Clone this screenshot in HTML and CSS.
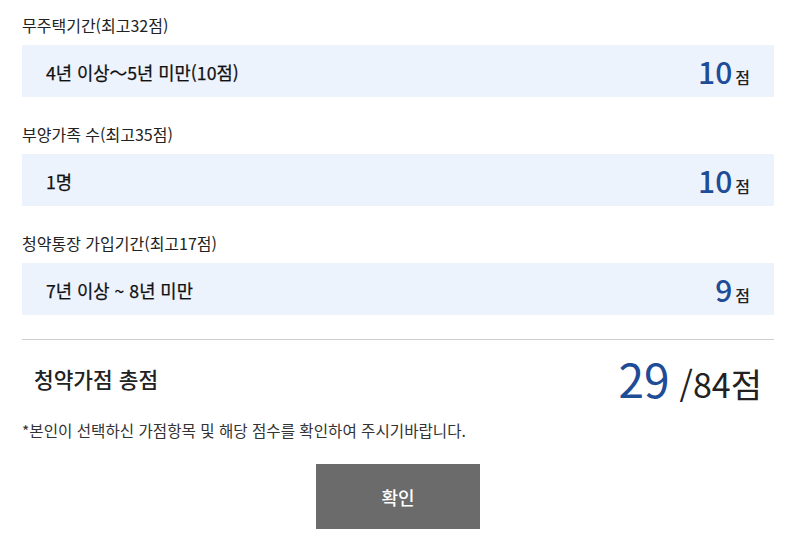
FILE: index.html
```html
<!DOCTYPE html>
<html lang="ko">
<head>
<meta charset="utf-8">
<link rel="stylesheet" href="styles.css">
</head>
<body>
<div class="page">
  <div class="group">
    <div class="label">무주택기간(최고32점)</div>
    <div class="box"><span class="val">4년 이상～5년 미만(10점)</span><span class="score"><b>10</b><i>점</i></span></div>
  </div>
  <div class="group">
    <div class="label">부양가족 수(최고35점)</div>
    <div class="box"><span class="val">1명</span><span class="score"><b>10</b><i>점</i></span></div>
  </div>
  <div class="group">
    <div class="label">청약통장 가입기간(최고17점)</div>
    <div class="box"><span class="val">7년 이상 ~ 8년 미만</span><span class="score"><b>9</b><i>점</i></span></div>
  </div>
  <div class="total">
    <span class="total-title">청약가점 총점</span>
    <span class="total-score"><b>29</b><span class="max">/84점</span></span>
  </div>
  <p class="note">*본인이 선택하신 가점항목 및 해당 점수를 확인하여 주시기바랍니다.</p>
  <div class="actions"><button class="btn">확인</button></div>
</div>
</body>
</html>
```
FILE: styles.css
```css
* { box-sizing: border-box; }
body { margin: 0; background: #fff; font-family: "Noto Sans CJK KR", "Noto Sans", sans-serif; color: #222; }
.page { padding: 15px 26px 0 22px; }
.group { margin-bottom: 27px; }
.group:nth-child(3) { margin-bottom: 24px; }
.label { font-size: 16px; line-height: 20px; height: 20px; margin-bottom: 10px; color: #222; }
.box { height: 52px; background: #edf3fd; display: flex; align-items: center; justify-content: space-between; padding: 0 24px 0 24px; }
.val { font-size: 17.7px; font-weight: 400; color: #111; padding-top: 2px; -webkit-text-stroke: 0.25px #111; }
.score { display: flex; align-items: baseline; padding-top: 2px; }
.score b { font-weight: 500; font-size: 30px; color: #1e4c96; line-height: 1; }
.score i { font-style: normal; font-size: 16px; margin-left: 3px; font-weight: 500; color: #222; }
.total { border-top: 1px solid #cfcfcf; height: 77px; display: flex; align-items: center; justify-content: space-between; padding: 0 12px 0 12px; }
.total-title { font-size: 21.4px; font-weight: 500; color: #222; }
.total-score { display: flex; align-items: baseline; }
.total-score b { font-weight: 400; font-size: 46px; color: #1e4c96; line-height: 1; }
.max { font-size: 34px; color: #222; margin-left: 10px; line-height: 1; }
.note { margin: 4px 0 0 0; font-size: 15.6px; line-height: 20px; color: #333; }
.actions { display: flex; justify-content: center; margin-top: 24px; }
.btn { width: 164px; height: 65px; border: 0; background: #6b6b6b; color: #fff; font-family: inherit; font-size: 18px; font-weight: 500; }
```
